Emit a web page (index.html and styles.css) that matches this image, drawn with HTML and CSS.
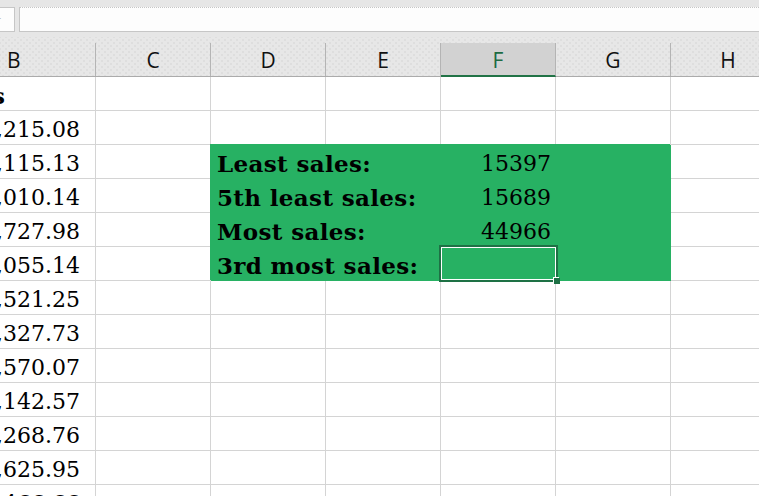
FILE: index.html
```html
<!DOCTYPE html>
<html>
<head>
<meta charset="utf-8">
<link rel="stylesheet" href="styles.css">
</head>
<body>
<div class="fbar">
  <div class="namebox"><span class="nb-glyph">r</span></div>
  <div class="finput"></div>
</div>
<div class="colhead">
  <div class="h">B</div>
  <div class="h">C</div>
  <div class="h">D</div>
  <div class="h">E</div>
  <div class="h sel-h">F</div>
  <div class="h">G</div>
  <div class="h">H</div>
</div>
<div class="sheet">
  <div class="c colb bold head">Sales</div><div class="c"></div><div class="c"></div><div class="c"></div><div class="c"></div><div class="c"></div><div class="c"></div>
  <div class="c colb">12,215.08</div><div class="c"></div><div class="c"></div><div class="c"></div><div class="c"></div><div class="c"></div><div class="c"></div>
  <div class="c colb">11,115.13</div><div class="c"></div><div class="c g label">Least sales:</div><div class="c g"></div><div class="c g num">15397</div><div class="c g"></div><div class="c"></div>
  <div class="c colb">16,010.14</div><div class="c"></div><div class="c g label">5th least sales:</div><div class="c g"></div><div class="c g num">15689</div><div class="c g"></div><div class="c"></div>
  <div class="c colb">13,727.98</div><div class="c"></div><div class="c g label">Most sales:</div><div class="c g"></div><div class="c g num">44966</div><div class="c g"></div><div class="c"></div>
  <div class="c colb">19,055.14</div><div class="c"></div><div class="c g label">3rd most sales:</div><div class="c g"></div><div class="c g active"><div class="sel"><span class="handle"></span></div></div><div class="c g"></div><div class="c"></div>
  <div class="c colb">15,521.25</div><div class="c"></div><div class="c"></div><div class="c"></div><div class="c"></div><div class="c"></div><div class="c"></div>
  <div class="c colb">18,327.73</div><div class="c"></div><div class="c"></div><div class="c"></div><div class="c"></div><div class="c"></div><div class="c"></div>
  <div class="c colb">14,570.07</div><div class="c"></div><div class="c"></div><div class="c"></div><div class="c"></div><div class="c"></div><div class="c"></div>
  <div class="c colb">17,142.57</div><div class="c"></div><div class="c"></div><div class="c"></div><div class="c"></div><div class="c"></div><div class="c"></div>
  <div class="c colb">13,268.76</div><div class="c"></div><div class="c"></div><div class="c"></div><div class="c"></div><div class="c"></div><div class="c"></div>
  <div class="c colb">12,625.95</div><div class="c"></div><div class="c"></div><div class="c"></div><div class="c"></div><div class="c"></div><div class="c"></div>
  <div class="c colb">16,466.66</div><div class="c"></div><div class="c"></div><div class="c"></div><div class="c"></div><div class="c"></div><div class="c"></div>
</div>
</body>
</html>
```
FILE: styles.css
```css
html, body {
  margin: 0;
  padding: 0;
  background: #ffffff;
  overflow: hidden;
  width: 759px;
  height: 496px;
}

.fbar {
  height: 37px;
  box-sizing: border-box;
  background: #e6e6e6;
  padding: 7px 0 5px 0;
  display: flex;
  gap: 4px;
}

.namebox {
  width: 15px;
  box-sizing: border-box;
  background: #fdfdfd;
  border: 1px solid #c6c6c6;
  border-left: none;
  display: flex;
  align-items: center;
  overflow: hidden;
}

.nb-glyph {
  font-family: "DejaVu Sans", sans-serif;
  font-size: 9px;
  color: #9a9a9a;
  margin-left: -3px;
}

.finput {
  flex: 1;
  background: #fdfdfd;
  border: 1px solid #c6c6c6;
  border-right: none;
  border-top-style: dotted;
}

.colhead {
  height: 40px;
  box-sizing: border-box;
  display: grid;
  grid-template-columns: 96px repeat(6, 115px);
  background-color: #e7e7e7;
  background-image:
    radial-gradient(circle, #dadada 0.6px, transparent 0.9px),
    radial-gradient(circle, #dadada 0.6px, transparent 0.9px);
  background-size: 6px 6px, 6px 6px;
  background-position: 0 0, 3px 3px;
  border-bottom: 1px solid #ababab;
}

.h {
  align-self: end;
  height: 33px;
  box-sizing: border-box;
  border-right: 1px solid #b4b4b4;
  display: flex;
  justify-content: center;
  align-items: flex-end;
  padding-bottom: 2px;
  font-family: "Open Sans", "Noto Sans", sans-serif;
  font-size: 21px;
  line-height: 28px;
  color: #111;
}

.colhead .h:first-child {
  justify-content: flex-start;
  padding-left: 7px;
}

.sel-h {
  height: 34px;
  margin-bottom: -1px;
  background-color: #d2d2d2;
  border-bottom: 2px solid #217346;
  padding-bottom: 1px;
  color: #1d6b42;
}

.sheet {
  display: grid;
  grid-template-columns: 96px repeat(6, 115px);
  grid-auto-rows: 34px;
}

.c {
  box-sizing: border-box;
  border-right: 1px solid #d4d4d4;
  border-bottom: 1px solid #d4d4d4;
  display: flex;
  align-items: flex-end;
  padding: 0 4px 2px 5px;
  white-space: nowrap;
  font-family: "DejaVu Serif", "Liberation Serif", serif;
  font-size: 22px;
  line-height: 26px;
  color: #000;
}

.colb {
  justify-content: flex-end;
  padding-right: 15px;
  padding-bottom: 1px;
}

.bold {
  font-weight: bold;
}

.head {
  padding-right: 90px;
  font-size: 23px;
}

.g {
  background: #27b163;
  border-color: #27b163;
  box-shadow: -1px -1px 0 0 #27b163;
}

.label {
  font-weight: bold;
  font-size: 23px;
  letter-spacing: 0.35px;
  padding-left: 6px;
  padding-bottom: 1px;
  z-index: 1;
}

.num {
  justify-content: flex-end;
  padding-right: 4px;
  padding-bottom: 1px;
}

.active {
  position: relative;
  z-index: 2;
}

.sel {
  position: absolute;
  left: -2px;
  top: -2px;
  width: 119px;
  height: 37px;
  box-sizing: border-box;
  border: 2px solid #1e7145;
  box-shadow: inset 0 0 0 1px #ffffff;
}

.handle {
  position: absolute;
  right: -4px;
  bottom: -4px;
  width: 6px;
  height: 6px;
  background: #1e7145;
  box-shadow: -1px -1px 0 0 #ffffff;
}
```
